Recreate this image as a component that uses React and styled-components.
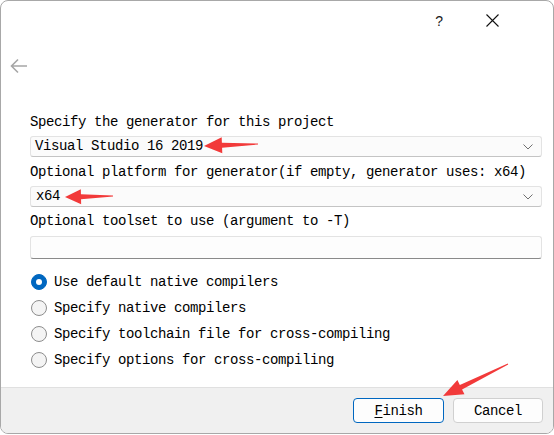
import styled, { createGlobalStyle } from 'styled-components'

const GlobalStyle = createGlobalStyle`
	html, body {
		margin: 0;
		padding: 0;
		background: #ffffff;
	}
`

const Window = styled.div`
	position: relative;
	box-sizing: border-box;
	width: 554px;
	height: 434px;
	border: 1px solid #a8a8a8;
	border-radius: 8px;
	background: #ffffff;
	display: flex;
	flex-direction: column;
	overflow: hidden;
	font-family: 'Liberation Mono', 'Noto Sans CJK SC', monospace;
	font-size: 14px;
	letter-spacing: -0.4px;
	color: #000000;
`

const TitleBar = styled.div`
	height: 39px;
	display: flex;
	justify-content: flex-end;
	align-items: center;
	padding-right: 54px;
	gap: 43px;
`

const Help = styled.span`
	font-family: 'Liberation Sans', sans-serif;
	font-size: 14px;
	letter-spacing: 0;
	color: #1a1a1a;
`

const BackRow = styled.div`
	height: 52px;
	display: flex;
	align-items: center;
	padding-left: 9px;
`

const Body = styled.div`
	display: flex;
	flex-direction: column;
	padding: 21px 11px 0 29px;
`

const FieldLabel = styled.div`
	height: 18px;
	line-height: 18px;
	margin-top: ${(p) => p.$gap || 0}px;
	white-space: nowrap;
`

const Combo = styled.div`
	box-sizing: border-box;
	height: 21px;
	margin-top: 5px;
	border: 1px solid #e3e3e3;
	border-bottom-color: #c4c4c4;
	border-radius: 3px;
	background: #fbfbfb;
	display: flex;
	align-items: center;
	justify-content: space-between;
	padding: 0 8px 0 ${(p) => p.$indent || 4}px;
	line-height: 19px;
`

const TextBox = styled.div`
	box-sizing: border-box;
	height: 23px;
	margin-top: 6px;
	border: 1px solid #e3e3e3;
	border-bottom: 1px solid #8a8a8a;
	border-radius: 3px;
	background: #fdfdfd;
`

const RadioList = styled.div`
	display: flex;
	flex-direction: column;
	margin-top: 10px;
`

const RadioRow = styled.div`
	height: 26px;
	display: flex;
	align-items: center;
	gap: 7px;
`

const RadioCircle = styled.span`
	box-sizing: border-box;
	width: 16px;
	height: 16px;
	margin-left: 1px;
	border-radius: 50%;
	flex-shrink: 0;
	background: ${(p) => (p.$checked ? '#0067c0' : '#f4f4f4')};
	border: 1px solid ${(p) => (p.$checked ? '#0067c0' : '#8d8d8d')};
	display: flex;
	align-items: center;
	justify-content: center;
	&::after {
		content: '';
		display: ${(p) => (p.$checked ? 'block' : 'none')};
		width: 6px;
		height: 6px;
		border-radius: 50%;
		background: #ffffff;
	}
`

const Footer = styled.div`
	box-sizing: border-box;
	margin-top: auto;
	height: 46px;
	flex-shrink: 0;
	border-top: 1px solid #e0e0e0;
	background: #f0f0f0;
	display: flex;
	justify-content: flex-end;
	align-items: flex-start;
	gap: 9px;
	padding: 10px 10px 0 0;
`

const Button = styled.button`
	box-sizing: border-box;
	width: ${(p) => (p.$primary ? 91 : 90)}px;
	height: 25px;
	border-radius: 4px;
	border: 1px solid ${(p) => (p.$primary ? '#0067c0' : '#d0d0d0')};
	background: #fdfdfd;
	font-family: inherit;
	font-size: 14px;
	letter-spacing: -0.4px;
	color: #000000;
	padding: 0;
	u {
		text-underline-offset: 2px;
	}
`

const Overlay = styled.svg`
	position: absolute;
	left: -1px;
	top: -1px;
	pointer-events: none;
`

const Chevron = () => (
	<svg width="10" height="6" viewBox="0 0 10 6">
		<path d="M0.5 0.5 L5 5 L9.5 0.5" fill="none" stroke="#707070" strokeWidth="1" />
	</svg>
)

// red annotation arrow: tail (x1,y1) -> tip (x2,y2)
const Arrow = ({ x1, y1, x2, y2, head = 16, wide = 7.5 }) => {
	const dx = x2 - x1
	const dy = y2 - y1
	const len = Math.hypot(dx, dy)
	const ux = dx / len
	const uy = dy / len
	const nx = -uy
	const ny = ux
	const bx = x2 - ux * head
	const by = y2 - uy * head
	const pts = [
		[x1 + nx * 0.5, y1 + ny * 0.5],
		[bx + nx * 2.5, by + ny * 2.5],
		[bx + nx * wide, by + ny * wide],
		[x2, y2],
		[bx - nx * wide, by - ny * wide],
		[bx - nx * 2.5, by - ny * 2.5],
		[x1 - nx * 0.5, y1 - ny * 0.5],
	]
	return <polygon points={pts.map((p) => p.join(',')).join(' ')} fill="#f23a3a" />
}

const radios = [
	'Use default native compilers',
	'Specify native compilers',
	'Specify toolchain file for cross-compiling',
	'Specify options for cross-compiling',
]

const App = () => {
	return (
		<>
			<GlobalStyle />
			<Window>
				<TitleBar>
					<Help>?</Help>
					<svg width="13" height="13" viewBox="0 0 13 13">
						<path d="M0.5 0.5 L12.5 12.5 M12.5 0.5 L0.5 12.5" stroke="#111" strokeWidth="1.1" />
					</svg>
				</TitleBar>
				<BackRow>
					<svg width="18" height="16" viewBox="0 0 18 16">
						<path d="M17 8 H2 M8 1.5 L1.5 8 L8 14.5" fill="none" stroke="#a6a6a6" strokeWidth="1.6" />
					</svg>
				</BackRow>
				<Body>
					<FieldLabel>Specify the generator for this project</FieldLabel>
					<Combo $indent={4}>
						<span>Visual Studio 16 2019</span>
						<Chevron />
					</Combo>
					<FieldLabel $gap={6}>Optional platform for generator(if empty, generator uses: x64)</FieldLabel>
					<Combo $indent={5}>
						<span>x64</span>
						<Chevron />
					</Combo>
					<FieldLabel $gap={5}>Optional toolset to use (argument to -T)</FieldLabel>
					<TextBox />
					<RadioList>
						{radios.map((r, i) => (
							<RadioRow key={r}>
								<RadioCircle $checked={i === 0} />
								<span>{r}</span>
							</RadioRow>
						))}
					</RadioList>
				</Body>
				<Footer>
					<Button $primary>
						<u>F</u>inish
					</Button>
					<Button>Cancel</Button>
				</Footer>
				<Overlay width="554" height="435">
					<Arrow x1={258} y1={144} x2={204} y2={146} head={18} wide={8} />
					<Arrow x1={113} y1={196} x2={65} y2={197} />
					<Arrow x1={508} y1={364} x2={443} y2={396} head={20} wide={8} />
				</Overlay>
			</Window>
		</>
	)
}

export default App
